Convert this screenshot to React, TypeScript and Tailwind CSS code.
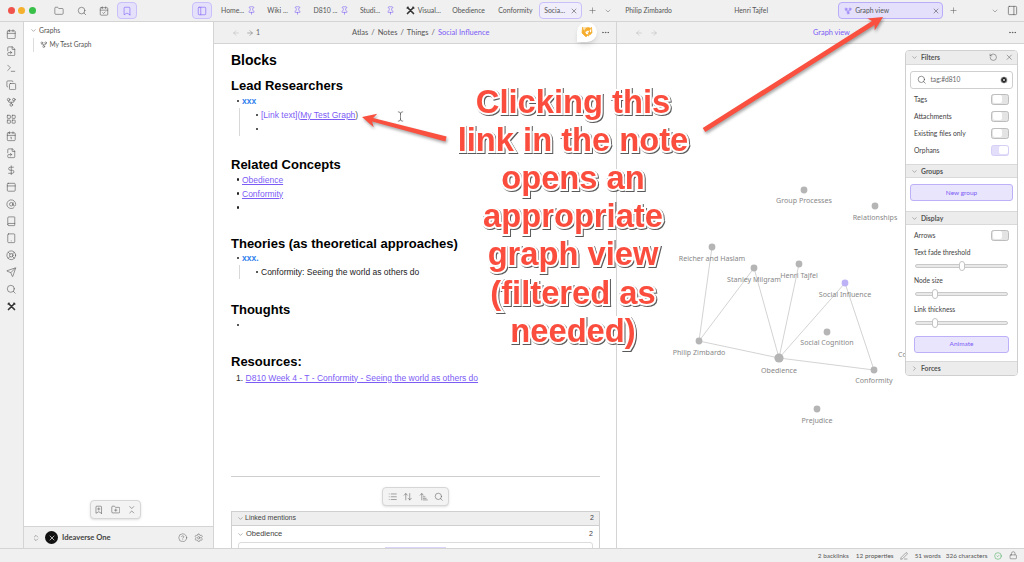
import React from "react";
import {
  Folder, Search, CalendarCheck, Bookmark, PanelLeft, Pin, X, Plus, ChevronDown, ChevronRight, ArrowLeft, ArrowRight,
  Calendar, FileSymlink, Terminal, Copy, GitFork, LayoutGrid, Calendar1, DollarSign, PanelTop, AtSign, Book, Tablet, LifeBuoy, Send,
  ChevronsUpDown, CircleHelp, Settings, BookmarkPlus, FolderPlus, ChevronsDownUp, List, ArrowUpDown, ArrowUpNarrowWide, MoreHorizontal,
  RotateCcw, CircleX, PenLine, CircleCheck, Lock, PanelRight, TextCursor, Handshake,
} from "lucide-react";

const ui = "font-['Lato',sans-serif]";

function Tools({ size = 11 }: { size?: number }) {
  return (
    <svg width={size} height={size} viewBox="0 0 12 12" className="text-[#333]">
      <path d="M2 2 L10 10 M10 2 L2 10" stroke="currentColor" strokeWidth="2.2" strokeLinecap="round" />
      <path d="M1 3.5 L3.5 1 M8.5 1 L11 3.5" stroke="currentColor" strokeWidth="1.4" />
    </svg>
  );
}

function Tab({ label, pin }: { label: string; pin?: boolean }) {
  return (
    <div className="flex h-full w-[46.3px] shrink-0 items-center pl-[7px] text-[6.9px] text-[#555]">
      <span className="w-[25px] whitespace-nowrap">{label}</span>
      {pin && <Pin size={9} strokeWidth={1.5} className="ml-[1px] text-[#7c5cf5]" />}
    </div>
  );
}

function TopBar() {
  return (
    <div className={`flex h-[22px] shrink-0 items-center border-b border-[#d4d4d4] bg-[#f0f0f0] ${ui}`}>
      <div className="flex w-[48px] shrink-0 items-center gap-[3.5px] pl-[7.5px]">
        <span className="h-[7px] w-[7px] rounded-full bg-[#f0534b]" />
        <span className="h-[7px] w-[7px] rounded-full bg-[#f5b12e]" />
        <span className="h-[7px] w-[7px] rounded-full bg-[#38c049]" />
      </div>
      <div className="flex w-[22.5px] justify-center text-[#555]"><Folder size={10} strokeWidth={1.4} /></div>
      <div className="flex w-[22.5px] justify-center text-[#555]"><Search size={10} strokeWidth={1.4} /></div>
      <div className="flex w-[22.5px] justify-center text-[#555]"><CalendarCheck size={10} strokeWidth={1.4} /></div>
      <div className="ml-[1px] flex h-[17px] w-[20px] items-center justify-center rounded-[4px] border border-[#c9bffa] bg-[#e5e1fb] text-[#7c5cf5]"><Bookmark size={10} strokeWidth={1.4} /></div>
      <div className="ml-[55px] flex h-[17px] w-[20px] items-center justify-center rounded-[4px] border border-[#c9bffa] bg-[#e5e1fb] text-[#7c5cf5]"><PanelLeft size={10} strokeWidth={1.4} /></div>
      <div className="w-[2.5px]" />
      <Tab label="Home..." pin />
      <Tab label="Wiki ..." pin />
      <Tab label="D810 ..." pin />
      <Tab label="Studi..." pin />
      <div className="ml-[6px] flex h-full w-[47px] shrink-0 items-center pl-[0.5px] text-[6.9px] text-[#555]">
        <Tools size={9} />
        <span className="ml-[3px] w-[26px] whitespace-nowrap">Visual...</span>
      </div>
      <div className="w-[46px] shrink-0 text-[6.9px] text-[#555]">Obedience</div>
      <div className="w-[41px] shrink-0 whitespace-nowrap text-[6.9px] text-[#555]">Conformity</div>
      <div className="flex h-[17px] w-[43px] shrink-0 items-center rounded-[4px] border border-[#c9bffa] bg-[#f0eefa] pl-[4px] text-[6.9px] text-[#555]">
        <span className="w-[23px] whitespace-nowrap">Socia...</span>
        <X size={8} strokeWidth={1.6} className="ml-[3px] text-[#444]" />
      </div>
      <div className="flex w-[20px] justify-center text-[#666]"><Plus size={9} strokeWidth={1.5} /></div>
      <div className="flex w-[11px] justify-center text-[#666]"><ChevronDown size={8} strokeWidth={1.5} /></div>
      <div className="ml-[12px] w-[109px] shrink-0 whitespace-nowrap text-[6.8px] text-[#555]">Philip Zimbardo</div>
      <div className="w-[104px] shrink-0 whitespace-nowrap text-[6.8px] text-[#555]">Henri Tajfel</div>
      <div className="flex h-[17px] w-[105px] shrink-0 items-center rounded-[4px] border border-[#b9acf8] bg-[#e4e0fb] pl-[5px] text-[6.8px] text-[#555]">
        <GitFork size={8} strokeWidth={1.6} className="text-[#7c5cf5]" />
        <span className="ml-[3px] w-[77px] whitespace-nowrap">Graph view</span>
        <X size={8} strokeWidth={1.6} className="text-[#444]" />
      </div>
      <div className="flex w-[20px] justify-center text-[#666]"><Plus size={9} strokeWidth={1.5} /></div>
      <div className="ml-[22px] flex w-[20px] justify-center text-[#666]"><ChevronDown size={8} strokeWidth={1.5} /></div>
      <div className="ml-[1px] flex w-[12px] justify-center text-[#555]"><PanelRight size={11} strokeWidth={1.4} /></div>
    </div>
  );
}

function Ribbon() {
  const icons = [Calendar, FileSymlink, Terminal, Copy, GitFork, LayoutGrid, Calendar1, FileSymlink, DollarSign, PanelTop, AtSign, Book, Tablet, LifeBuoy, Send, Search];
  return (
    <div className="flex w-[24px] shrink-0 flex-col items-center border-r border-[#d4d4d4] bg-[#f0f0f0] pt-[3.5px] text-[#555]">
      {icons.map((I, i) => (
        <div key={i} className="flex h-[17.05px] w-full items-center justify-center"><I size={10.5} strokeWidth={1.4} /></div>
      ))}
      <div className="flex h-[17px] w-full items-center justify-center"><Tools size={9} /></div>
    </div>
  );
}

function Sidebar() {
  return (
    <div className={`flex w-[190px] shrink-0 flex-col border-r border-[#d4d4d4] bg-white ${ui}`}>
      <div className="relative flex-1 pl-[6px] pt-[2px] text-[#555]">
        <div className="flex h-[13px] items-center text-[6.8px]">
          <ChevronDown size={7} strokeWidth={1.5} />
          <span className="ml-[2px]">Graphs</span>
        </div>
        <div className="ml-[2.5px] mt-[1px] flex h-[14px] items-center border-l border-[#dcdcdc] pl-[6px] text-[6.6px]">
          <GitFork size={7.5} strokeWidth={1.6} />
          <span className="ml-[2.5px]">My Test Graph</span>
        </div>
        <div className="absolute bottom-[7px] left-[66px] flex h-[19px] w-[51px] items-center justify-center gap-[7px] rounded-[4px] border border-[#d6d6d6] bg-[#f3f3f3] text-[#555] shadow-sm">
          <BookmarkPlus size={9.5} strokeWidth={1.4} />
          <FolderPlus size={9.5} strokeWidth={1.4} />
          <ChevronsDownUp size={9.5} strokeWidth={1.4} />
        </div>
      </div>
      <div className="flex h-[22px] shrink-0 items-center border-t border-[#d4d4d4] bg-[#f0f0f0] pl-[8px] text-[#555]">
        <ChevronsUpDown size={8} strokeWidth={1.4} />
        <div className="ml-[5px] flex h-[13px] w-[13px] items-center justify-center rounded-full bg-[#111] text-white"><X size={8} strokeWidth={2} /></div>
        <span className="ml-[4px] w-[116px] text-[7.6px] font-bold text-[#444]">Ideaverse One</span>
        <CircleHelp size={9.5} strokeWidth={1.2} />
        <Settings size={9.5} strokeWidth={1.2} className="ml-[6.5px]" />
      </div>
    </div>
  );
}

function PaneHeaderNote() {
  return (
    <div className={`relative flex h-[22px] shrink-0 items-center border-b border-[#d4d4d4] bg-[#f0f0f0] pl-[18px] text-[#666] ${ui}`}>
      <ArrowLeft size={8} strokeWidth={1.3} className="text-[#aaa]" />
      <ArrowRight size={8} strokeWidth={1.3} className="ml-[6px] text-[#555]" />
      <span className="ml-[2px] text-[7px]">1</span>
      <div className="ml-[92px] flex gap-[3px] whitespace-nowrap text-[7.5px] text-[#555]">
        <span>Atlas</span><span>/</span><span>Notes</span><span>/</span><span>Things</span><span>/</span>
        <span className="text-[#7c5cf5]">Social Influence</span>
      </div>
      <div className="absolute left-[363px] top-[0px] z-10 flex h-[20px] w-[20px] items-center justify-center rounded-full rounded-bl-[2px] bg-white shadow-md">
        <Handshake size={12} strokeWidth={1.5} fill="#f6ac2c" className="text-[#f6ac2c]" />
      </div>
      <MoreHorizontal size={9} strokeWidth={1.6} className="absolute left-[387px] text-[#444]" />
    </div>
  );
}

function H2({ children, className = "" }: { children: React.ReactNode; className?: string }) {
  return <div className={`h-[18px] text-[13px] font-bold leading-[18px] text-black ${className}`}>{children}</div>;
}

function Li({ children, className = "" }: { children?: React.ReactNode; className?: string }) {
  return (
    <div className={`flex h-[14px] items-center text-[8.5px] leading-[14px] text-[#222] ${className}`}>
      <span className="ml-[5.5px] mr-[3px] h-[2.5px] w-[2.5px] shrink-0 rounded-full bg-[#222]" />
      {children}
    </div>
  );
}

const link = "text-[#7c5cf5] underline";

function NotePane() {
  return (
    <div className="flex w-[403px] shrink-0 flex-col border-r border-[#d4d4d4] bg-white">
      <PaneHeaderNote />
      <div className="relative flex-1 overflow-hidden pl-[17px] pr-[16px] font-['Liberation_Sans',sans-serif]">
        <div className="mt-[6px] h-[20px] text-[14px] font-bold leading-[20px] text-black">Blocks</div>
        <H2 className="mt-[7px]">Lead Researchers</H2>
        <Li className="mt-[-1px]"><span className="font-bold text-[#2f80ed]">xxx</span></Li>
        <div className="ml-[7.5px] border-l border-[#d8d8d8] pl-[10.5px]">
          <Li><span className="text-[#7c5cf5]">[Link text]</span><span className="text-[#7c5cf5]">(</span><span className={link}>My Test Graph</span><span className="text-[#555]">)</span></Li>
          <Li />
        </div>
        <H2 className="mt-[20px]">Related Concepts</H2>
        <Li className="mt-[-1.5px]"><span className={link}>Obedience</span></Li>
        <Li><span className={link}>Conformity</span></Li>
        <Li />
        <H2 className="mt-[20.5px]">Theories (as theoretical approaches)</H2>
        <Li className="mt-[-2px]"><span className="font-bold text-[#2f80ed]">xxx.</span></Li>
        <div className="ml-[7.5px] border-l border-[#d8d8d8] pl-[10.5px]">
          <Li>Conformity: Seeing the world as others do</Li>
        </div>
        <H2 className="mt-[22px]">Thoughts</H2>
        <Li className="mt-[-1px]" />
        <H2 className="mt-[21px]">Resources:</H2>
        <div className="flex h-[14px] items-center pl-[5px] text-[8.5px] text-[#222]">
          <span className="mr-[2.5px]">1.</span>
          <span className={link}>D810 Week 4 - T - Conformity - Seeing the world as others do</span>
        </div>
        <div className="mt-[91px] h-px bg-[#cfcfcf]" />
        <div className="mx-auto mt-[10px] flex h-[19px] w-[67px] items-center justify-center gap-[6px] rounded-[4px] border border-[#d6d6d6] bg-[#f3f3f3] text-[#555] shadow-sm">
          <List size={9.5} strokeWidth={1.3} />
          <ArrowUpDown size={9.5} strokeWidth={1.3} />
          <ArrowUpNarrowWide size={9.5} strokeWidth={1.3} />
          <Search size={9.5} strokeWidth={1.3} />
        </div>
        <div className="mt-[5px] border border-[#cfcfcf]">
          <div className="flex h-[14px] items-center justify-between border-b border-[#cfcfcf] bg-[#eeeeee] pl-[5px] pr-[5px] text-[7px] text-[#444]">
            <span className="flex items-center gap-[1px]"><ChevronDown size={7} strokeWidth={1.3} />Linked mentions</span>
            <span>2</span>
          </div>
          <div className="flex h-[16px] items-center justify-between pl-[5px] pr-[6px] text-[7.5px] text-[#444]">
            <span className="flex items-center gap-[2px]"><ChevronDown size={7} strokeWidth={1.3} />Obedience</span>
            <span className="text-[7px]">2</span>
          </div>
          <div className="mx-[6px] flex h-[20px] justify-center rounded-t-[3px] border border-[#dcdcdc] pt-[4px]">
            <span className="h-[2px] w-[61px] bg-[#d9d4f8]" />
          </div>
        </div>
      </div>
    </div>
  );
}

function Toggle({ on }: { on?: boolean }) {
  return (
    <span className={`flex h-[11px] w-[18px] rounded-[2.5px] border p-[0.5px] ${on ? "justify-end border-[#d6d0f6] bg-[#e3dffb]" : "border-[#bdbdbd] bg-[#e4e4e4]"}`}>
      <span className="h-full w-[9px] rounded-[2px] bg-white" />
    </span>
  );
}

function PanelHead({ title, open = true, children }: { title: string; open?: boolean; children?: React.ReactNode }) {
  return (
    <div className="flex h-[14px] items-center border-y border-[#d9d9d9] bg-[#ececec] pl-[5px] pr-[4px] text-[6.8px] font-bold text-[#555]">
      {open ? <ChevronDown size={7} strokeWidth={1.4} /> : <ChevronRight size={7} strokeWidth={1.4} />}
      <span className="ml-[3px] flex-1">{title}</span>
      {children}
    </div>
  );
}

function Row({ label, on, className = "" }: { label: string; on?: boolean; className?: string }) {
  return (
    <div className={`flex h-[17px] items-center justify-between pl-[8px] pr-[8px] text-[6.8px] text-[#444] ${className}`}>
      <span>{label}</span>
      <Toggle on={on} />
    </div>
  );
}

function Slider({ pct }: { pct: number }) {
  return (
    <div className="relative mx-[9px] mt-[5px] h-[4px] rounded-full border border-[#c9c9c9] bg-[#e9e9e9]">
      <span className="absolute top-[-4px] h-[10px] w-[6px] rounded-[3px] border border-[#c4c4c4] bg-white" style={{ left: `${pct}%` }} />
    </div>
  );
}

function FilterPanel() {
  return (
    <div className={`absolute right-[6px] top-[6px] w-[113px] overflow-hidden rounded-[4px] border border-[#cfcfcf] bg-white ${ui}`}>
      <div className="[&>div]:border-t-0">
        <PanelHead title="Filters">
          <RotateCcw size={8.5} strokeWidth={1.3} className="mr-[7px] text-[#444]" />
          <X size={8.5} strokeWidth={1.3} className="text-[#444]" />
        </PanelHead>
      </div>
      <div className="mx-[4px] mt-[6px] flex h-[18px] items-center rounded-[3px] border border-[#cfcfcf] pl-[6px] pr-[4px] text-[6.6px] text-[#666]">
        <Search size={9.5} strokeWidth={1.3} className="text-[#333]" />
        <span className="ml-[4px] flex-1">tag:#d810</span>
        <CircleX size={8} strokeWidth={2} fill="#222" className="text-white" />
      </div>
      <Row label="Tags" className="mt-[1.5px]" />
      <Row label="Attachments" />
      <Row label="Existing files only" />
      <Row label="Orphans" on className="mb-[5.5px]" />
      <PanelHead title="Groups" />
      <div className="mx-[4px] mt-[6px] flex h-[17px] items-center justify-center rounded-[3px] border border-[#bdb0f9] bg-[#e9e5fc] text-[6.5px] text-[#7c5cf5]">New group</div>
      <div className="h-[10px]" />
      <PanelHead title="Display" />
      <Row label="Arrows" className="mt-[1.5px]" />
      <div className="mt-[1px] h-[14px] pl-[8px] text-[6.7px] leading-[14px] text-[#444]">Text fade threshold</div>
      <Slider pct={47} />
      <div className="mt-[5.5px] h-[14px] pl-[8px] text-[6.7px] leading-[14px] text-[#444]">Node size</div>
      <Slider pct={18} />
      <div className="mt-[5.5px] h-[14px] pl-[8px] text-[6.7px] leading-[14px] text-[#444]">Link thickness</div>
      <Slider pct={18} />
      <div className="mx-[8px] mt-[11px] flex h-[17px] items-center justify-center rounded-[3px] border border-[#bdb0f9] bg-[#e9e5fc] text-[6.5px] text-[#7c5cf5]">Animate</div>
      <div className="mt-[8px] [&>div]:border-b-0">
        <PanelHead title="Forces" open={false} />
      </div>
    </div>
  );
}

const nodes: [string, number, number, number, number][] = [
  ["Group Processes", 804, 190, 3.4, 203],
  ["Relationships", 875, 206, 3.4, 219.5],
  ["Reicher and Haslam", 712, 247, 3.4, 260.5],
  ["Stanley Milgram", 754, 268, 3.4, 281.5],
  ["Henri Tajfel", 799, 264, 3.4, 277.5],
  ["Social Influence", 845, 283, 3.4, 296.5],
  ["Social Cognition", 827, 332, 3.4, 345],
  ["Philip Zimbardo", 699, 341, 3.4, 354.5],
  ["Obedience", 779, 358, 4.6, 372.5],
  ["Conformity", 874, 370, 3.4, 383],
  ["Prejudice", 817, 409, 3.4, 422.5],
];
const edges = [[2, 7], [3, 7], [3, 8], [4, 8], [5, 8], [5, 9], [7, 8], [8, 9]];

function GraphPane() {
  return (
    <div className="relative flex flex-1 flex-col bg-white">
      <div className={`flex h-[22px] shrink-0 items-center border-b border-[#d4d4d4] bg-[#f0f0f0] pl-[18px] text-[#aaa] ${ui}`}>
        <ArrowLeft size={8} strokeWidth={1.3} />
        <ArrowRight size={8} strokeWidth={1.3} className="ml-[7px]" />
        <span className="ml-[155px] w-[178px] whitespace-nowrap text-[7.4px] text-[#7c5cf5]">Graph view</span>
        <MoreHorizontal size={9} strokeWidth={1.6} className="ml-[17px] text-[#444]" />
      </div>
      <div className="relative flex-1 overflow-hidden">
        <svg viewBox="617 44 407 504" className="absolute inset-0 h-full w-full font-['Noto_Sans',sans-serif]">
          {edges.map(([a, b], i) => (
            <line key={i} x1={nodes[a][1]} y1={nodes[a][2]} x2={nodes[b][1]} y2={nodes[b][2]} stroke="#c8c8c8" strokeWidth="0.8" />
          ))}
          {nodes.map(([name, x, y, r, ly], i) => (
            <g key={name}>
              <circle cx={x} cy={y} r={r} fill={i === 5 ? "#bdb2f5" : "#b5b5b5"} />
              <text x={x} y={ly} textAnchor="middle" fontSize="7.1" fill="#888">{name}</text>
            </g>
          ))}
          <text x="898" y="357" fontSize="7.1" fill="#888">Co</text>
        </svg>
        <FilterPanel />
      </div>
    </div>
  );
}

function StatusBar() {
  return (
    <div className={`flex h-[14px] shrink-0 items-center justify-end border-t border-[#d4d4d4] bg-[#f0f0f0] pr-[7px] text-[6.4px] text-[#555] ${ui}`}>
      <span>2 backlinks</span>
      <span className="ml-[7px]">12 properties</span>
      <PenLine size={8} strokeWidth={1.4} className="ml-[6px]" />
      <span className="ml-[7px]">51 words</span>
      <span className="ml-[5px]">326 characters</span>
      <CircleCheck size={8} strokeWidth={1.5} className="ml-[6px] text-[#3aa655]" />
      <Lock size={8.5} strokeWidth={1.4} className="ml-[7px]" />
    </div>
  );
}

function Annotations() {
  const lines = ["Clicking this", "link in the note", "opens an", "appropriate", "graph view", "(filtered as", "needed)"];
  return (
    <>
      <svg viewBox="0 0 1024 562" className="pointer-events-none absolute inset-0 z-20 h-[562px] w-[1024px] drop-shadow-[1px_2px_1.5px_rgba(0,0,0,0.35)]">
        <polygon points="446.6,136.6 445.4,141.4 372.1,121.5 373.7,127.3 362,117 377.3,113.7 373.1,118.1" fill="#f9503f" />
        <polygon points="705.3,132.1 702.7,127.9 872,21 867.3,18.4 883,17 874.7,30.4 874.5,25" fill="#f9503f" />
      </svg>
      <div className="pointer-events-none absolute left-[395px] top-[111px] z-20 text-[#333]"><TextCursor size={11} strokeWidth={1.2} /></div>
      <div className="pointer-events-none absolute left-[373px] top-[82.5px] z-30 w-[400px] text-center font-['Liberation_Sans',sans-serif] text-[32.7px] font-bold leading-[38.2px] text-[#fb4d3d] drop-shadow-[1px_1.5px_0.5px_rgba(60,60,60,0.85)] [-webkit-text-stroke:4px_white] [paint-order:stroke_fill]">
        {lines.map((l) => <div key={l} className="whitespace-nowrap">{l}</div>)}
      </div>
    </>
  );
}

export default function App() {
  return (
    <div className="relative flex h-[562px] w-[1024px] flex-col overflow-hidden bg-white">
      <TopBar />
      <div className="flex min-h-0 flex-1">
        <Ribbon />
        <Sidebar />
        <NotePane />
        <GraphPane />
      </div>
      <StatusBar />
      <Annotations />
    </div>
  );
}
